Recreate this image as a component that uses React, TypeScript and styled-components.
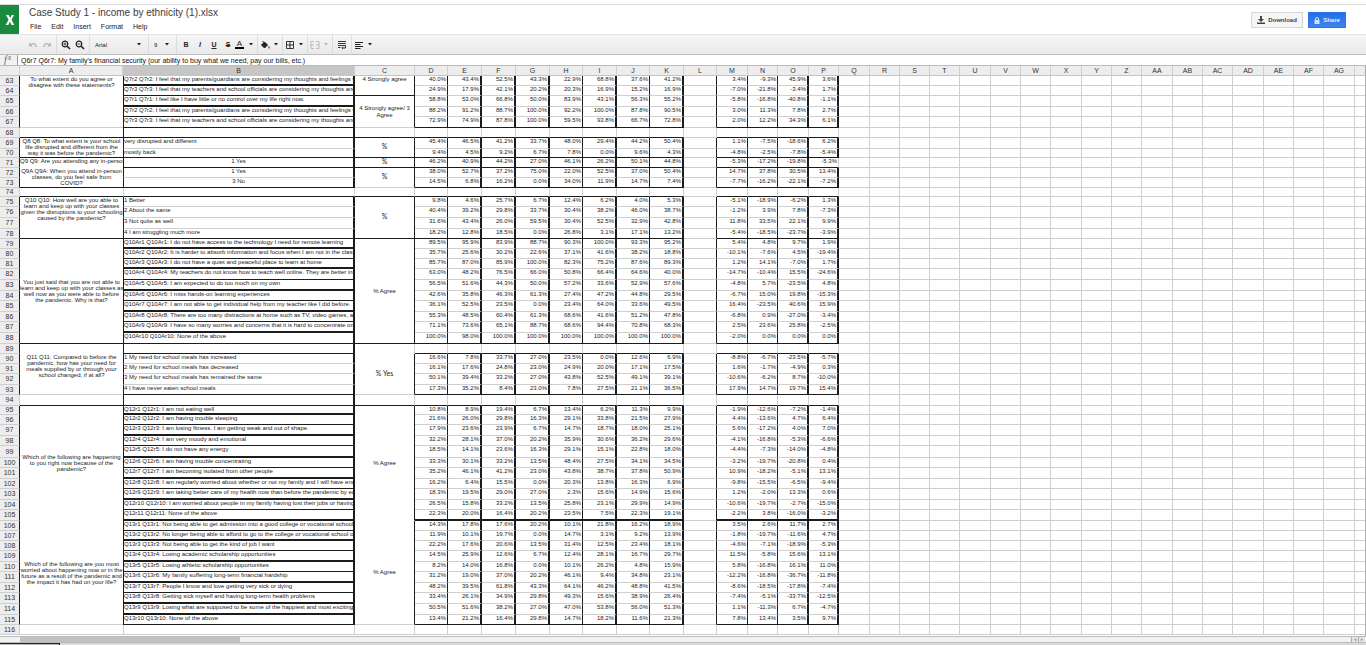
import React from "react";
import styled, { createGlobalStyle, css } from "styled-components";

const GlobalStyle = createGlobalStyle`
  * { box-sizing: border-box; }
  html, body, #root { height: 100%; }
  body {
    margin: 0;
    background: #fff;
    color: #222;
    font-family: "Liberation Sans", Arial, sans-serif;
    overflow: hidden;
  }
`;

const GRID = "#cfcfcf";
const INK = "#1c1c1c";

const Page = styled.div`
  display: flex;
  flex-direction: column;
  height: 100%;
  padding-top: 4px;
`;

const Header = styled.header`
  display: flex;
  flex: none;
  height: 31px;
  border-top: 1px solid #dadada;
  border-bottom: 1px solid #e2e2e2;
`;

const Logo = styled.div`
  display: flex;
  align-items: center;
  justify-content: center;
  width: 19px;
  background: #1b8a3e;
`;

const Heading = styled.div`
  flex: 1;
  padding: 2px 0 0 10px;
`;

const Title = styled.h1`
  margin: 0;
  font-size: 10px;
  line-height: 12px;
  font-weight: 400;
  color: #3c3c3c;
`;

const Menu = styled.nav`
  display: flex;
  gap: 9px;
  padding-top: 3px;
`;

const MenuItem = styled.button`
  border: 0;
  padding: 0 0 0 1px;
  background: none;
  font: 7px/9px "Liberation Sans", Arial, sans-serif;
  color: #222;
`;

const Actions = styled.div`
  display: flex;
  gap: 5px;
  padding: 7px 20px 0 0;
`;

const ActionButton = styled.button<{ $primary?: boolean }>`
  display: flex;
  align-items: center;
  justify-content: center;
  gap: 3px;
  height: 16px;
  width: ${(p) => (p.$primary ? 38 : 52)}px;
  padding: 0;
  border: 1px solid ${(p) => (p.$primary ? "#2f74e6" : "#d6d6d6")};
  background: ${(p) => (p.$primary ? "linear-gradient(#1f6fe8, #4285f0)" : "#f5f5f5")};
  color: ${(p) => (p.$primary ? "#e4eefd" : "#444")};
  font: bold 6px/8px "Liberation Sans", Arial, sans-serif;
`;

const Toolbar = styled.div`
  display: flex;
  flex: none;
  align-items: stretch;
  height: 20px;
  padding-left: 24px;
  border-bottom: 1px solid #bdbdbd;
  background: linear-gradient(#f6f6f6, #e9e9e9);
`;

const Group = styled.div<{ $last?: boolean }>`
  display: flex;
  align-items: center;
  padding: 0 2px;
  border-right: 1px solid ${(p) => (p.$last ? "transparent" : "#dcdcdc")};
`;

const Tool = styled.button<{ $menu?: boolean; $muted?: boolean }>`
  display: flex;
  align-items: center;
  justify-content: ${(p) => (p.$menu ? "space-between" : "center")};
  width: ${(p) => (p.$menu ? 20 : 14)}px;
  height: 14px;
  padding: 0 ${(p) => (p.$menu ? 2 : 0)}px 0 0;
  border: 0;
  background: none;
  color: ${(p) => (p.$muted ? "#b5b5b5" : "#222")};
`;

const Picker = styled.label<{ $wide?: boolean }>`
  display: flex;
  align-items: center;
  width: ${(p) => (p.$wide ? 54 : 23)}px;
  padding: 0 5px 0 3px;
`;

const Select = styled.select`
  flex: 1;
  min-width: 0;
  appearance: none;
  border: 0;
  padding: 0;
  background: none;
  color: #222;
  font: 6px/8px "Liberation Sans", Arial, sans-serif;
`;

const FormulaBar = styled.div`
  display: flex;
  flex: none;
  height: 11px;
  border-bottom: 1px solid #bbb;
`;

const FxLabel = styled.label`
  display: flex;
  width: 18px;
  padding-left: 4px;
  border-right: 1px solid #999;
  background: #f2f2f2;
  color: #666;
  font: italic 10px/9px "Liberation Serif", serif;

  span { padding-left: 1px; font-size: 8px; line-height: 5px; }
`;

const FormulaInput = styled.input`
  flex: 1;
  border: 0;
  outline: 0;
  padding: 0 3px;
  color: #111;
  font: 7px/9px "Liberation Sans", Arial, sans-serif;
`;

const Viewport = styled.main`
  flex: 1;
  min-height: 0;
  overflow: hidden;
  border-right: 1px solid #b0b0b0;
`;

const Sheet = styled.table`
  width: 100%;
  min-width: 1385px;
  table-layout: fixed;
  border-collapse: separate;
  border-spacing: 0;
`;

const Col = styled.col<{ $w: number }>`
  width: ${(p) => p.$w}px;
`;

const heading = css`
  padding: 0;
  background: #ededed;
  color: #333;
  font-size: 7px;
  line-height: 8px;
  font-weight: 400;
  text-align: center;
  overflow: hidden;
`;

const ColHead = styled.th<{ $selected?: boolean }>`
  ${heading}
  height: 10px;
  border-right: 1px solid ${GRID};
  border-bottom: 1px solid #c4c4c4;
  ${(p) => p.$selected && "background: #c6c6c6;"}
`;

const RowHead = styled.th<{ $ink?: boolean }>`
  ${heading}
  border-bottom: 1px solid ${GRID};
  border-right: 1px solid ${(p) => (p.$ink ? INK : GRID)};
`;

const Row = styled.tr<{ $h: number }>`
  height: ${(p) => p.$h}px;
`;

type Line = 0 | 1 | 2;

const edge = (l?: Line) => (l ? `${l}px solid ${INK}` : `1px solid ${GRID}`);

const Cell = styled.td<{ $bottom?: Line; $right?: Line }>`
  padding: 0 1px;
  border-right: ${(p) => edge(p.$right)};
  border-bottom: ${(p) => edge(p.$bottom)};
  font-size: 6px;
  line-height: 7px;
  vertical-align: top;
  white-space: nowrap;
  overflow: hidden;
`;

const NumberCell = styled(Cell)`
  text-align: right;
`;

const QuestionCell = styled(Cell)<{ $middle?: boolean; $open?: boolean }>`
  padding: 0;
  border-right: 0;
  line-height: 6px;
  text-align: center;
  vertical-align: ${(p) => (p.$middle ? "middle" : "top")};
  white-space: pre;
  ${(p) => p.$open && "border-bottom-color: #fff;"}
`;

const AnswerCell = styled(Cell)<{ $left?: boolean; $center?: boolean }>`
  padding: 0;
  border-left: 1px solid ${(p) => (p.$left ? INK : GRID)};
  text-align: ${(p) => (p.$center ? "center" : "left")};
`;

const ScaleCell = styled(Cell)<{ $humanist?: boolean; $top?: boolean; $open?: boolean }>`
  line-height: 7px;
  text-align: center;
  vertical-align: ${(p) => (p.$top ? "top" : "middle")};
  white-space: pre;
  ${(p) => p.$humanist && "padding-bottom: 3px; font-family: Lato, sans-serif; font-size: 7px; line-height: 6px;"}
  ${(p) => p.$open && "border-bottom-color: #fff;"}
`;

const ScrollBar = styled.div`
  display: flex;
  flex: none;
  justify-content: space-between;
  height: 7px;
  padding-left: 20px;
  border-top: 1px solid #bbb;
  border-bottom: 1px solid #bbb;
  background: #f2f2f2;
`;

const Thumb = styled.div`
  width: 220px;
  background: #c1c1c1;
`;

const Arrows = styled.div`
  display: flex;
  padding-right: 1px;
`;

const Arrow = styled.button`
  width: 7px;
  padding: 0;
  border: 0;
  border-left: 1px solid #aaa;
  background: #e4e4e4;
  color: #999;
  font: 5px/5px "DejaVu Sans", sans-serif;
`;

const TabStrip = styled.footer`
  flex: none;
  height: 2px;
  background: #dadada;
`;

const ActiveTab = styled.div`
  width: 60px;
  height: 2px;
  border-top: 1px solid #222;
  border-right: 1px solid #222;
  background: #bbb;
`;

const WIDTHS = [
  20, 103, 232, 60, 33, 34, 34, 34, 33, 34, 33, 34, 33, 31, 30, 31, 30, 31, 30, 30,
  30, 31, 30, 30, 31, 30, 30, 31, 30, 30, 31, 30, 30, 31, 30,
];

const LETTERS = "A B C D E F G H I J K L M N O P Q R S T U V W X Y Z AA AB AC AD AE AF AG AH".split(" ");
const LEFT_EDGES: Line[] = [1, 2, 2, 2, 1, 2, 1, 2];
const RIGHT_EDGES: Line[] = [1, 1, 2, 2];
const TRAILING = 18;

interface Merge {
  span: number;
  text: string;
  bottom?: Line;
  middle?: boolean;
  humanist?: boolean;
  top?: boolean;
}

interface RowData {
  n: number;
  h: number;
  b?: string;
  line?: Line;
  values?: string;
  block?: Line;
  a?: Merge;
  c?: Merge;
  center?: boolean;
}

const ROWS: RowData[] = [
  { n: 63, h: 10, line: 2, b: "Q7r2 Q7r2: I feel that my parents/guardians are considering my thoughts and feelings when making decisions", values: "40.0 43.4 52.5 43.3 22.9 68.8 37.6 41.2 3.4 -9.3 45.9 3.6",
    a: { span: 5, text: "To what extent do you agree or\ndisagree with these statements?" }, c: { span: 2, text: "4 Strongly agree", bottom: 1, top: true } },
  { n: 64, h: 10, line: 1, b: "Q7r3 Q7r3: I feel that my teachers and school officials are considering my thoughts and feelings", values: "24.9 17.9 42.1 20.2 20.3 16.9 15.2 16.9 -7.0 -21.8 -3.4 1.7" },
  { n: 65, h: 11, line: 2, b: "Q7r1 Q7r1: I feel like I have little or no control over my life right now.", values: "58.8 53.0 66.8 50.0 83.9 43.1 56.3 55.2 -5.8 -16.8 -40.8 -1.1",
    c: { span: 3, text: "4 Strongly agree/ 3\nAgree", middle: true } },
  { n: 66, h: 10, line: 1, b: "Q7r2 Q7r2: I feel that my parents/guardians are considering my thoughts and feelings when making decisions", values: "88.2 91.2 88.7 100.0 92.2 100.0 87.8 90.5 3.0 11.3 7.8 2.7" },
  { n: 67, h: 11, line: 1, block: 1, b: "Q7r3 Q7r3: I feel that my teachers and school officials are considering my thoughts and feelings", values: "72.9 74.9 87.8 100.0 59.5 93.8 66.7 72.8 2.0 12.2 34.3 6.1" },
  { n: 68, h: 10, line: 1, block: 1 },
  { n: 69, h: 11, b: "very disrupted and different", values: "45.4 46.5 41.2 33.7 48.0 29.4 44.2 50.4 1.1 -7.5 -18.6 6.2",
    a: { span: 2, text: "Q8 Q8: To what extent is your school\nlife disrupted and different from the\nway it was before the pandemic?", bottom: 1 }, c: { span: 2, text: "%", bottom: 1, humanist: true } },
  { n: 70, h: 9, line: 1, block: 1, b: "mostly back", values: "9.4 4.5 9.2 6.7 7.8 0.0 9.6 4.3 -4.8 -2.5 -7.8 -5.4" },
  { n: 71, h: 10, line: 1, block: 1, center: true, b: "1 Yes", values: "46.2 40.9 44.2 27.0 46.1 26.2 50.1 44.8 -5.3 -17.2 -19.8 -5.3",
    a: { span: 1, text: "Q9 Q9: Are you attending any in-person" }, c: { span: 1, text: "%", humanist: true, bottom: 1 } },
  { n: 72, h: 10, center: true, b: "1 Yes", values: "38.0 52.7 37.2 75.0 22.0 52.5 37.0 50.4 14.7 37.8 30.5 13.4",
    a: { span: 2, text: "Q9A Q9A: When you attend in-person\nclasses, do you feel safe from\nCOVID?", bottom: 1 }, c: { span: 2, text: "%", humanist: true } },
  { n: 73, h: 10, line: 1, block: 1, center: true, b: "3 No", values: "14.5 6.8 16.2 0.0 34.0 11.9 14.7 7.4 -7.7 -16.2 -22.1 -7.2" },
  { n: 74, h: 9, line: 1, block: 1 },
  { n: 75, h: 10, b: "1 Better", values: "9.8 4.6 25.7 6.7 12.4 6.2 4.0 5.3 -5.1 -18.9 -6.2 1.3",
    a: { span: 4, text: "Q10 Q10: How well are you able to\nlearn and keep up with your classes\ngiven the disruptions to your schooling\ncaused by the pandemic?", bottom: 1 }, c: { span: 4, text: "%", humanist: true, bottom: 1 } },
  { n: 76, h: 11, b: "2 About the same", values: "40.4 39.2 29.8 33.7 30.4 38.2 46.0 38.7 -1.2 3.9 7.8 -7.3" },
  { n: 77, h: 11, b: "3 Not quite as well", values: "31.6 43.4 26.0 59.5 30.4 52.5 32.9 42.8 11.8 33.5 22.1 9.9" },
  { n: 78, h: 10, line: 1, block: 1, b: "4 I am struggling much more", values: "18.2 12.8 18.5 0.0 26.8 3.1 17.1 13.2 -5.4 -18.5 -23.7 -3.9" },
  { n: 79, h: 10, line: 2, b: "Q10Ar1 Q10Ar1: I do not have access to the technology I need for remote learning", values: "89.5 95.9 83.9 88.7 90.3 100.0 93.3 95.2 5.4 4.8 9.7 1.9",
    a: { span: 10, text: "You just said that you are not able to\nlearn and keep up with your classes as\nwell now as you were able to before\nthe pandemic. Why is that?", middle: true, bottom: 1 }, c: { span: 10, text: "% Agree", bottom: 1 } },
  { n: 80, h: 10, line: 1, b: "Q10Ar2 Q10Ar2: It is harder to absorb information and focus when I am not in the classroom", values: "35.7 25.6 30.2 22.6 37.1 41.6 38.2 18.8 -10.1 -7.6 4.5 -19.4" },
  { n: 81, h: 10, line: 2, b: "Q10Ar3 Q10Ar3: I do not have a quiet and peaceful place to learn at home", values: "85.7 87.0 85.9 100.0 82.3 75.2 87.6 89.3 1.2 14.1 -7.0 1.7" },
  { n: 82, h: 11, line: 1, b: "Q10Ar4 Q10Ar4: My teachers do not know how to teach well online. They are better in-person", values: "63.0 48.2 76.5 66.0 50.8 66.4 64.6 40.0 -14.7 -10.4 15.5 -24.6" },
  { n: 83, h: 11, line: 2, b: "Q10Ar5 Q10Ar5: I am expected to do too much on my own", values: "56.5 51.6 44.3 50.0 57.2 33.6 52.9 57.6 -4.8 5.7 -23.5 4.8" },
  { n: 84, h: 10, line: 1, b: "Q10Ar6 Q10Ar6: I miss hands-on learning experiences", values: "42.6 35.8 46.3 61.3 27.4 47.2 44.8 29.5 -6.7 15.0 19.8 -15.3" },
  { n: 85, h: 11, line: 2, b: "Q10Ar7 Q10Ar7: I am not able to get individual help from my teacher like I did before.", values: "36.1 52.5 23.5 0.0 23.4 64.0 33.6 49.5 16.4 -23.5 40.6 15.9" },
  { n: 86, h: 10, line: 1, b: "Q10Ar8 Q10Ar8: There are too many distractions at home such as TV, video games, and family", values: "55.3 48.5 60.4 61.3 68.6 41.6 51.2 47.8 -6.8 0.9 -27.0 -3.4" },
  { n: 87, h: 11, line: 2, b: "Q10Ar9 Q10Ar9: I have so many worries and concerns that it is hard to concentrate on school", values: "71.1 73.6 65.1 88.7 68.6 94.4 70.8 68.3 2.5 23.6 25.8 -2.5" },
  { n: 88, h: 11, line: 1, block: 1, b: "Q10Ar10 Q10Ar10: None of the above", values: "100.0 98.0 100.0 100.0 100.0 100.0 100.0 100.0 -2.0 0.0 0.0 0.0" },
  { n: 89, h: 10, line: 1, block: 1 },
  { n: 90, h: 10, b: "1 My need for school meals has increased", values: "16.6 7.8 33.7 27.0 23.5 0.0 12.6 6.9 -8.8 -6.7 -23.5 -5.7",
    a: { span: 4, text: "Q11 Q11: Compared to before the\npandemic, how has your need for\nmeals supplied by or through your\nschool changed, if at all?" }, c: { span: 4, text: "% Yes", humanist: true } },
  { n: 91, h: 10, b: "2 My need for school meals has decreased", values: "16.1 17.6 24.8 23.0 24.9 20.0 17.1 17.5 1.6 -1.7 -4.9 0.3" },
  { n: 92, h: 11, b: "3 My need for school meals has remained the same", values: "50.1 39.4 33.2 27.0 43.8 52.5 49.1 39.1 -10.6 -6.2 8.7 -10.0" },
  { n: 93, h: 10, line: 1, block: 1, b: "4 I have never eaten school meals", values: "17.3 35.2 8.4 23.0 7.8 27.5 21.1 36.5 17.9 14.7 19.7 15.4" },
  { n: 94, h: 11, line: 1, block: 1 },
  { n: 95, h: 9, line: 2, b: "Q12r1 Q12r1: I am not eating well", values: "10.8 8.9 19.4 6.7 13.4 6.2 11.3 9.9 -1.9 -12.6 -7.2 -1.4",
    a: { span: 11, text: "Which of the following are happening\nto you right now because of the\npandemic?", middle: true }, c: { span: 11, text: "% Agree" } },
  { n: 96, h: 10, line: 1, b: "Q12r2 Q12r2: I am having trouble sleeping", values: "21.6 26.0 29.8 16.3 29.1 33.8 21.5 27.9 4.4 -13.6 4.7 6.4" },
  { n: 97, h: 11, line: 2, b: "Q12r3 Q12r3: I am losing fitness. I am getting weak and out of shape.", values: "17.9 23.6 23.9 6.7 14.7 18.7 18.0 25.1 5.6 -17.2 4.0 7.0" },
  { n: 98, h: 10, line: 1, b: "Q12r4 Q12r4: I am very moody and emotional", values: "32.2 28.1 37.0 20.2 35.9 30.6 36.2 29.6 -4.1 -16.8 -5.3 -6.6" },
  { n: 99, h: 12, line: 2, b: "Q12r5 Q12r5: I do not have any energy", values: "18.5 14.1 23.6 16.3 29.1 15.1 22.8 18.0 -4.4 -7.3 -14.0 -4.8" },
  { n: 100, h: 10, line: 1, b: "Q12r6 Q12r6: I am having trouble concentrating", values: "33.3 30.1 33.2 13.5 48.4 27.5 34.1 34.5 -3.2 -19.7 -20.8 0.4" },
  { n: 101, h: 11, line: 2, b: "Q12r7 Q12r7: I am becoming isolated from other people", values: "35.2 46.1 41.2 23.0 43.8 38.7 37.8 50.9 10.9 -18.2 -5.1 13.1" },
  { n: 102, h: 10, line: 1, b: "Q12r8 Q12r8: I am regularly worried about whether or not my family and I will have enough food", values: "16.2 6.4 15.5 0.0 20.3 13.8 16.3 6.9 -9.8 -15.5 -6.5 -9.4" },
  { n: 103, h: 11, line: 2, b: "Q12r9 Q12r9: I am taking better care of my health now than before the pandemic by eating", values: "18.3 19.5 29.0 27.0 2.3 15.6 14.9 15.6 1.2 -2.0 13.3 0.6" },
  { n: 104, h: 10, line: 1, b: "Q12r10 Q12r10: I am worried about people in my family having lost their jobs or having their", values: "26.5 15.8 33.2 13.5 25.8 23.1 29.9 14.9 -10.6 -19.7 -2.7 -15.0" },
  { n: 105, h: 11, line: 2, block: 2, b: "Q12r11 Q12r11: None of the above", values: "22.3 20.0 16.4 20.2 23.5 7.5 22.3 19.1 -2.2 3.8 -16.0 -3.2" },
  { n: 106, h: 10, line: 1, b: "Q13r1 Q13r1: Not being able to get admission into a good college or vocational school", values: "14.3 17.8 17.6 20.2 10.1 21.8 16.2 18.9 3.5 2.6 11.7 2.7",
    a: { span: 10, text: "Which of the following are you most\nworried about happening now or in the\nfuture as a result of the pandemic and\nthe impact it has had on your life?", middle: true }, c: { span: 10, text: "% Agree" } },
  { n: 107, h: 10, line: 2, b: "Q13r2 Q13r2: No longer being able to afford to go to the college or vocational school of my", values: "11.9 10.1 19.7 0.0 14.7 3.1 9.2 13.9 -1.8 -19.7 -11.6 4.7" },
  { n: 108, h: 10, line: 1, b: "Q13r3 Q13r3: Not being able to get the kind of job I want", values: "22.2 17.6 20.6 13.5 31.4 12.5 23.4 18.1 -4.6 -7.1 -18.9 -5.3" },
  { n: 109, h: 11, line: 2, b: "Q13r4 Q13r4: Losing academic scholarship opportunities", values: "14.5 25.9 12.6 6.7 12.4 28.1 16.7 29.7 11.5 -5.8 15.6 13.1" },
  { n: 110, h: 10, line: 1, b: "Q13r5 Q13r5: Losing athletic scholarship opportunities", values: "8.2 14.0 16.8 0.0 10.1 26.2 4.8 15.9 5.8 -16.8 16.1 11.0" },
  { n: 111, h: 11, line: 2, b: "Q13r6 Q13r6: My family suffering long-term financial hardship", values: "31.2 19.0 37.0 20.2 46.1 9.4 34.8 23.1 -12.2 -16.8 -36.7 -11.8" },
  { n: 112, h: 10, line: 1, b: "Q13r7 Q13r7: People I know and love getting very sick or dying", values: "48.2 39.5 61.8 43.3 64.1 46.2 48.8 41.5 -8.6 -18.5 -17.8 -7.4" },
  { n: 113, h: 11, line: 2, b: "Q13r8 Q13r8: Getting sick myself and having long-term health problems", values: "33.4 26.1 34.9 29.8 49.3 15.6 38.9 26.4 -7.4 -5.1 -33.7 -12.5" },
  { n: 114, h: 11, line: 2, b: "Q13r9 Q13r9: Losing what are supposed to be some of the happiest and most exciting years", values: "50.5 51.6 38.2 27.0 47.0 53.8 56.0 51.3 1.1 -11.3 6.7 -4.7" },
  { n: 115, h: 10, line: 1, block: 1, b: "Q13r10 Q13r10: None of the above", values: "13.4 21.2 16.4 29.8 14.7 18.2 11.6 21.3 7.8 13.4 3.5 9.7" },
  { n: 116, h: 10 },
];

const SheetRow = ({ row }: { row: RowData }) => {
  const values = row.values ? row.values.split(" ") : [];
  const filled = values.length > 0;
  const open = row.n === 89;
  const boxed = filled || row.n === 68 || row.n === 89 || row.n === 94;
  const value = (i: number) => (filled ? `${values[i]}%` : null);
  return (
    <Row $h={row.h}>
      <RowHead scope="row" $ink={filled || open}>{row.n}</RowHead>
      {row.a && (
        <QuestionCell rowSpan={row.a.span} $bottom={row.a.bottom} $middle={row.a.middle} $open={row.n === 95 || row.n === 71}>
          {row.a.text}
        </QuestionCell>
      )}
      {!filled && <QuestionCell $bottom={open || row.n === 116 ? 0 : row.line} $open={open} />}
      <AnswerCell $bottom={row.line} $right={boxed ? 2 : 0} $left={boxed} $center={row.center}>{row.b}</AnswerCell>
      {row.c && (
        <ScaleCell
          rowSpan={row.c.span}
          $bottom={row.c.bottom}
          $right={1}
          $humanist={row.c.humanist}
          $top={row.c.top}
          $open={row.n === 95}
        >
          {row.c.text}
        </ScaleCell>
      )}
      {!filled && <ScaleCell $bottom={open ? 0 : row.line} $open={open} />}
      {LEFT_EDGES.map((line, i) => (
        <NumberCell key={i} $bottom={row.block} $right={filled ? line : 0}>{value(i)}</NumberCell>
      ))}
      <Cell $right={filled ? 1 : 0} />
      {RIGHT_EDGES.map((line, i) => (
        <NumberCell key={i} $bottom={row.block} $right={filled && !(row.n === 71 && i === 3) ? line : 0}>
          {value(i + 8)}
        </NumberCell>
      ))}
      {Array.from({ length: TRAILING }, (_, i) => <Cell key={i} />)}
    </Row>
  );
};

const Caret = () => (
  <svg width="4" height="3" viewBox="0 0 4 3" aria-hidden="true"><path d="M0 0h4L2 2.5z" fill="currentColor" /></svg>
);

const Icon = ({ children }: { children: React.ReactNode }) => (
  <svg width="10" height="10" viewBox="0 0 10 10" fill="none" stroke="currentColor" aria-hidden="true">{children}</svg>
);

const Letter = styled.span<{ $kind: "bold" | "italic" | "under" | "strike" | "color" }>`
  font-size: 7px;
  line-height: 7px;
  font-family: "Liberation Sans", Arial, sans-serif;
  font-weight: ${(p) => (p.$kind === "color" ? 400 : 700)};
  ${(p) => p.$kind === "italic" && "font-style: italic;"}
  ${(p) => p.$kind === "under" && "text-decoration: underline;"}
  ${(p) => p.$kind === "strike" && "text-decoration: line-through;"}
  ${(p) => p.$kind === "color" && "width: 9px; border-bottom: 2px solid #000; font-size: 8px; text-align: center;"}
`;

export default function App() {
  return (
    <Page>
      <GlobalStyle />
      <Header>
        <Logo>
          <svg width="10" height="12" viewBox="0 0 10 12" aria-label="Spreadsheet">
            <path d="M1 1h2.7l1.5 3L6.700 1H9L6.500 5.800 9.300 11H6.500L4.900 7.600 3.300 11H.7l2.900-5.200z" fill="#fff" />
          </svg>
        </Logo>
        <Heading>
          <Title>Case Study 1 - income by ethnicity (1).xlsx</Title>
          <Menu>
            {["File", "Edit", "Insert", "Format", "Help"].map((m) => <MenuItem key={m}>{m}</MenuItem>)}
          </Menu>
        </Heading>
        <Actions>
          <ActionButton>
            <svg width="8" height="8" viewBox="0 0 8 8" aria-hidden="true"><path d="M3 0h2v3h2L4 6 1 3h2zM0 6.500h8V8H0z" fill="#444" /></svg>
            Download
          </ActionButton>
          <ActionButton $primary>
            <svg width="6" height="7" viewBox="0 0 6 7" aria-hidden="true">
              <path d="M1.500 3V2a1.500 1.500 0 0 1 3 0v1" fill="none" stroke="#cfe0fb" />
              <path d="M.5 3h5v4h-5z" fill="#cfe0fb" />
            </svg>
            Share
          </ActionButton>
        </Actions>
      </Header>
      <Toolbar>
        <Group>
          <Tool $muted aria-label="Undo"><Icon><path d="M2 5C4 3 7.500 3 8.500 7" strokeWidth="1.300" /><path d="M1 2.500v4h4z" fill="currentColor" stroke="none" /></Icon></Tool>
          <Tool $muted aria-label="Redo"><Icon><path d="M8 5C6 3 2.500 3 1.500 7" strokeWidth="1.300" /><path d="M9 2.500v4H5z" fill="currentColor" stroke="none" /></Icon></Tool>
        </Group>
        <Group>
          <Tool aria-label="Zoom in"><Icon><circle cx="4" cy="4" r="2.800" strokeWidth="1.200" /><path d="M6 6l3 3" strokeWidth="1.600" /><path d="M2.500 4h3M4 2.500v3" strokeWidth=".8" /></Icon></Tool>
          <Tool aria-label="Zoom out"><Icon><circle cx="4" cy="4" r="2.800" strokeWidth="1.200" /><path d="M6 6l3 3" strokeWidth="1.600" /><path d="M2.500 4h3" strokeWidth=".8" /></Icon></Tool>
        </Group>
        <Group>
          <Picker $wide><Select aria-label="Font" defaultValue="Arial"><option>Arial</option></Select><Caret /></Picker>
        </Group>
        <Group>
          <Picker><Select aria-label="Font size" defaultValue="9"><option>9</option></Select><Caret /></Picker>
        </Group>
        <Group>
          <Tool aria-label="Bold"><Letter $kind="bold">B</Letter></Tool>
          <Tool aria-label="Italic"><Letter $kind="italic">I</Letter></Tool>
          <Tool aria-label="Underline"><Letter $kind="under">U</Letter></Tool>
          <Tool aria-label="Strikethrough"><Letter $kind="strike">S</Letter></Tool>
          <Tool $menu aria-label="Text colour"><Letter $kind="color">A</Letter><Caret /></Tool>
        </Group>
        <Group>
          <Tool $menu aria-label="Fill colour"><Icon><path d="M1.500 5l3-3 3 3-3 3z" fill="currentColor" /><path d="M2.500 1l2 2M9 6.500v2" /></Icon><Caret /></Tool>
        </Group>
        <Group>
          <Tool $menu aria-label="Borders"><Icon><path d="M1.500 1.500h7v7h-7zM5 1.500v7M1.500 5h7" strokeWidth=".9" /></Icon><Caret /></Tool>
        </Group>
        <Group>
          <Tool $menu $muted aria-label="Merge cells"><Icon><path d="M4 1.500H1v7h3M6 1.500h3v7H6M1 5h3M6 5h3" strokeWidth=".9" /></Icon><Caret /></Tool>
        </Group>
        <Group>
          <Tool aria-label="Wrap text"><Icon><path d="M1 1.500h8M1 3.500h8M1 5.500h7.500v2.500H5M1 7.500h2.500M6 6.800L4.800 8 6 9.200" strokeWidth=".9" /></Icon></Tool>
        </Group>
        <Group $last>
          <Tool $menu aria-label="Align"><Icon><path d="M1 2.500h8M1 4.500h5.500M1 6.500h8M1 8.500h5.500" /></Icon><Caret /></Tool>
        </Group>
      </Toolbar>
      <FormulaBar>
        <FxLabel htmlFor="formula">f<span>x</span></FxLabel>
        <FormulaInput id="formula" defaultValue="Q6r7 Q6r7: My family's financial security (our ability to buy what we need, pay our bills, etc.)" />
      </FormulaBar>
      <Viewport>
        <Sheet>
          <colgroup>{WIDTHS.map((w, i) => <Col key={i} $w={w} />)}</colgroup>
          <thead>
            <tr>
              <ColHead />
              {LETTERS.map((l) => <ColHead key={l} scope="col" $selected={l === "B"}>{l}</ColHead>)}
            </tr>
          </thead>
          <tbody>{ROWS.map((row) => <SheetRow key={row.n} row={row} />)}</tbody>
        </Sheet>
      </Viewport>
      <ScrollBar>
        <Thumb />
        <Arrows>
          <Arrow aria-label="Scroll left">◂</Arrow>
          <Arrow aria-label="Scroll right">▸</Arrow>
        </Arrows>
      </ScrollBar>
      <TabStrip><ActiveTab /></TabStrip>
    </Page>
  );
}
